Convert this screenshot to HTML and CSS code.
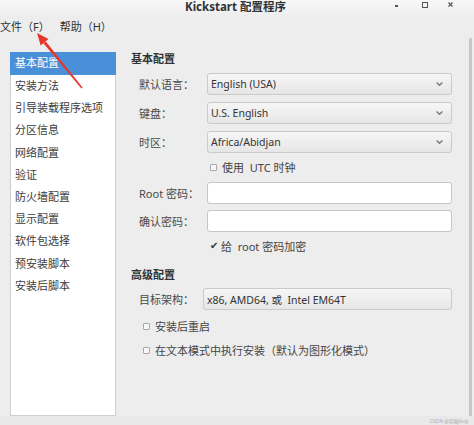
FILE: index.html
```html
<!DOCTYPE html>
<html lang="zh">
<head>
<meta charset="utf-8">
<title>Kickstart 配置程序</title>
<link rel="stylesheet" href="styles.css">
</head>
<body>
<div class="window">
  <header class="titlebar">
    <span class="title">Kickstart 配置程序</span>
    <div class="controls">
      <span class="ctl ctl-min"></span>
      <span class="ctl ctl-max"></span>
      <span class="ctl ctl-close"><svg class="x-icon" viewBox="0 0 5 5"><path d="M0.5 0.5 L4.5 4.5 M4.5 0.5 L0.5 4.5"/></svg></span>
    </div>
  </header>
  <nav class="menubar">
    <span class="menu">文件（F）</span>
    <span class="menu">帮助（H）</span>
  </nav>
  <div class="body">
    <ul class="sidebar">
      <li class="item selected">基本配置</li>
      <li class="item">安装方法</li>
      <li class="item">引导装载程序选项</li>
      <li class="item">分区信息</li>
      <li class="item">网络配置</li>
      <li class="item">验证</li>
      <li class="item">防火墙配置</li>
      <li class="item">显示配置</li>
      <li class="item">软件包选择</li>
      <li class="item">预安装脚本</li>
      <li class="item">安装后脚本</li>
    </ul>
    <main class="panel">
      <h2 class="section">基本配置</h2>
      <div class="field f-first">
        <span class="lbl">默认语言：</span>
        <div class="combo"><span class="combo-text">English (USA)</span><svg class="chev" viewBox="0 0 7 4"><path d="M0.6 0.6 L3.5 3.3 L6.4 0.6"/></svg></div>
      </div>
      <div class="field f-next">
        <span class="lbl">键盘：</span>
        <div class="combo"><span class="combo-text">U.S. English</span><svg class="chev" viewBox="0 0 7 4"><path d="M0.6 0.6 L3.5 3.3 L6.4 0.6"/></svg></div>
      </div>
      <div class="field f-next">
        <span class="lbl">时区：</span>
        <div class="combo"><span class="combo-text">Africa/Abidjan</span><svg class="chev" viewBox="0 0 7 4"><path d="M0.6 0.6 L3.5 3.3 L6.4 0.6"/></svg></div>
      </div>
      <div class="check check-basic c-utc">
        <span class="box"></span><span class="check-text">使用&nbsp; UTC 时钟</span>
      </div>
      <div class="field f-entry1">
        <span class="lbl">Root 密码：</span>
        <div class="entry"></div>
      </div>
      <div class="field f-entry2">
        <span class="lbl">确认密码：</span>
        <div class="entry"></div>
      </div>
      <div class="check check-basic c-enc">
        <span class="tick">✔</span><span class="check-text">给&nbsp; root 密码加密</span>
      </div>
      <h2 class="section s-adv">高级配置</h2>
      <div class="field field-adv">
        <span class="lbl">目标架构：</span>
        <div class="combo"><span class="combo-text">x86, AMD64, 或&nbsp; Intel EM64T</span></div>
      </div>
      <div class="check check-adv c-reboot">
        <span class="box"></span><span class="check-text">安装后重启</span>
      </div>
      <div class="check check-adv c-text">
        <span class="box"></span><span class="check-text">在文本模式中执行安装（默认为图形化模式）</span>
      </div>
    </main>
  </div>
  <footer class="footer"><span class="watermark">CSDN @巨龍bug</span></footer>
  <svg class="arrow" viewBox="0 0 474 425" width="474" height="425">
    <polygon points="37,33 40.7,45.5 48.5,39.1" />
    <polygon points="43.4,43.2 45.8,41.4 82.6,87.5 81.4,88.5" />
  </svg>
</div>
</body>
</html>
```

FILE: styles.css
```css
* { box-sizing: border-box; }
html, body { margin: 0; padding: 0; }
body {
  width: 474px;
  height: 425px;
  overflow: hidden;
  background: #ededed;
  font-family: "Noto Sans", "Noto Sans CJK SC", sans-serif;
  color: #3a3a3a;
}
.window {
  position: relative;
  width: 474px;
  height: 425px;
  display: flex;
  flex-direction: column;
}
.titlebar {
  height: 16px;
  position: relative;
  display: flex;
  justify-content: center;
  align-items: flex-start;
  background: linear-gradient(#f7f7f7, #eeeeee);
}
.title {
  font-size: 11.5px;
  font-weight: bold;
  color: #2e3436;
  line-height: 14px;
  margin-left: -3px;
}
.controls {
  position: absolute;
  right: 0;
  top: 0;
  display: flex;
}
.ctl {
  display: block;
  width: 27px;
  height: 10px;
  position: relative;
}
.ctl-min::after {
  content: "";
  position: absolute;
  left: 2px; top: 5px;
  width: 3px; height: 1.5px;
  background: #555;
}
.ctl-max::after {
  content: "";
  position: absolute;
  left: 2px; top: 2px;
  width: 4px; height: 4px;
  border: 1px solid #555;
}
.ctl-close { padding: 2px 0 0 1px; }
.x-icon {
  display: block;
  width: 5px;
  height: 5px;
  fill: none;
  stroke: #555;
  stroke-width: 1.2;
}
.menubar {
  height: 22px;
  display: flex;
  align-items: center;
  gap: 10px;
  font-size: 11px;
  color: #2e3436;
}
.menu { line-height: 14px; }
.body {
  flex: 1;
  display: flex;
  padding: 14px 0 0 10px;
  margin-right: 2px;
  border-right: 3px solid #c8c8c8;
}
.sidebar {
  list-style: none;
  margin: 0;
  padding: 0;
  width: 106px;
  height: 364px;
  background: #fff;
  border: 1px solid #cfcfcf;
  font-size: 11px;
  color: #3c3c3c;
}
.item {
  height: 22.2px;
  line-height: 22.2px;
  padding-left: 4px;
  white-space: nowrap;
}
.item.selected {
  background: #4a90d9;
  color: #fff;
  margin: -1px -1px 0 -1px;
  padding-left: 5px;
  height: 23px;
}
.panel {
  margin-left: 15px;
  width: 321px;
  display: flex;
  flex-direction: column;
  font-size: 11px;
}
.section {
  margin: 0;
  height: 14px;
  line-height: 14px;
  font-size: 11px;
  font-weight: bold;
  color: #2e3436;
}
.s-adv { margin-top: 15px; }
.field {
  display: flex;
  align-items: center;
  height: 22px;
  margin-top: 7px;
}
.f-entry1 { margin-top: 8px; }
.f-entry2 { margin-top: 6px; }
.field-adv { margin-top: 6px; }
.lbl {
  width: 76px;
  padding-left: 8px;
  color: #4a4a4a;
  white-space: nowrap;
  flex: none;
}
.field-adv .lbl { width: 72px; }
.combo {
  flex: 1;
  height: 22px;
  border: 1px solid #cacaca;
  border-radius: 3px;
  background: linear-gradient(#f6f6f6, #e6e6e6);
  display: flex;
  align-items: center;
  justify-content: space-between;
  padding: 0 8px 0 3px;
  color: #333;
  font-size: 10.5px;
}
.combo-text { white-space: nowrap; }
.chev {
  width: 7px;
  height: 4px;
  fill: none;
  stroke: #7a7a7a;
  stroke-width: 1.4;
}
.entry {
  flex: 1;
  height: 22px;
  background: #fff;
  border: 1px solid #c6c6c6;
  border-radius: 3px;
}
.check {
  display: flex;
  align-items: center;
  height: 14px;
  margin-top: 7px;
  color: #444;
  white-space: nowrap;
}
.check-basic { padding-left: 79px; }
.check-adv { padding-left: 12px; }
.c-reboot { margin-top: 9px; }
.c-text { margin-top: 10px; }
.box {
  width: 7px;
  height: 7px;
  border: 1px solid #a8a8a8;
  border-radius: 1px;
  background: #f8f8f8;
  margin-right: 5px;
  flex: none;
}
.tick {
  font-size: 10px;
  width: 11px;
  color: #333;
  line-height: 14px;
  font-family: "DejaVu Sans", sans-serif;
}
.footer {
  height: 9px;
  display: flex;
  justify-content: flex-end;
  align-items: center;
  padding-right: 6px;
  background: #e9e9e9;
}
.watermark {
  font-size: 5px;
  color: #a9a9a9;
  line-height: 6px;
}
.arrow {
  position: absolute;
  left: 0;
  top: 0;
  pointer-events: none;
  fill: #e8372a;
}
```
